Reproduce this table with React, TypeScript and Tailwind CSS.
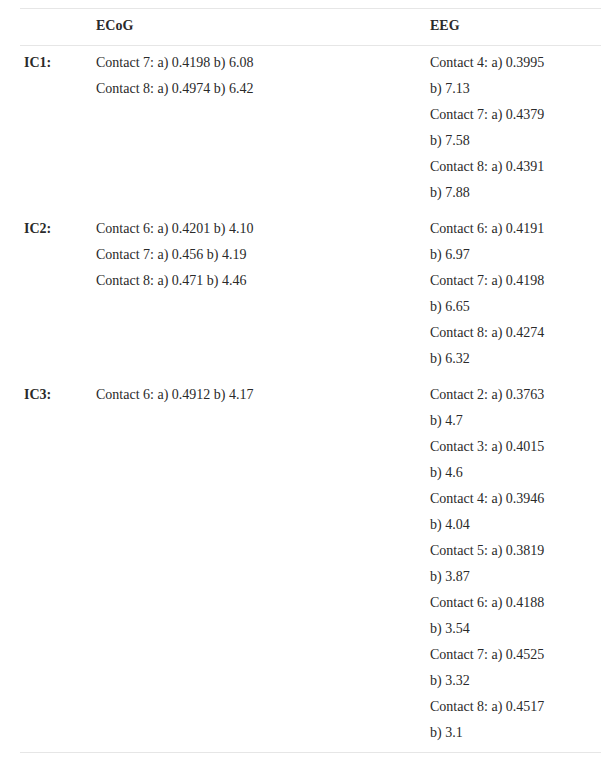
const ROWS = [
  {
    label: "IC1:",
    ecog: ["Contact 7: a) 0.4198 b) 6.08", "Contact 8: a) 0.4974 b) 6.42"],
    eeg: [
      ["Contact 4: a) 0.3995", "b) 7.13"],
      ["Contact 7: a) 0.4379", "b) 7.58"],
      ["Contact 8: a) 0.4391", "b) 7.88"],
    ],
  },
  {
    label: "IC2:",
    ecog: [
      "Contact 6: a) 0.4201 b) 4.10",
      "Contact 7: a) 0.456 b) 4.19",
      "Contact 8: a) 0.471 b) 4.46",
    ],
    eeg: [
      ["Contact 6: a) 0.4191", "b) 6.97"],
      ["Contact 7: a) 0.4198", "b) 6.65"],
      ["Contact 8: a) 0.4274", "b) 6.32"],
    ],
  },
  {
    label: "IC3:",
    ecog: ["Contact 6: a) 0.4912 b) 4.17"],
    eeg: [
      ["Contact 2: a) 0.3763", "b) 4.7"],
      ["Contact 3: a) 0.4015", "b) 4.6"],
      ["Contact 4: a) 0.3946", "b) 4.04"],
      ["Contact 5: a) 0.3819", "b) 3.87"],
      ["Contact 6: a) 0.4188", "b) 3.54"],
      ["Contact 7: a) 0.4525", "b) 3.32"],
      ["Contact 8: a) 0.4517", "b) 3.1"],
    ],
  },
];

export default function App() {
  return (
    <div className="min-h-[761px] bg-white pt-2 pl-5 font-['Liberation_Serif',serif] text-[14px] leading-[26px] text-[#2a2a2a]">
      <div className="border-t border-b border-[#e6e6e6]">
        {/* Header */}
        <div className="grid grid-cols-[72px_334px_1fr] border-b border-[#e6e6e6] pt-[4px] pb-[6px] font-bold">
          <div />
          <div className="pl-1">ECoG</div>
          <div className="pl-1">EEG</div>
        </div>

        {/* Body */}
        {ROWS.map((row) => (
          <div key={row.label} className="grid grid-cols-[72px_334px_1fr] pt-[4px] pb-[6px]">
            <div className="pl-1 font-bold">{row.label}</div>
            <div className="pl-1">
              {row.ecog.map((line) => (
                <div key={line}>{line}</div>
              ))}
            </div>
            <div className="pl-1">
              {row.eeg.map(([a, b]) => (
                <div key={a}>
                  <div>{a}</div>
                  <div>{b}</div>
                </div>
              ))}
            </div>
          </div>
        ))}
      </div>
    </div>
  );
}
